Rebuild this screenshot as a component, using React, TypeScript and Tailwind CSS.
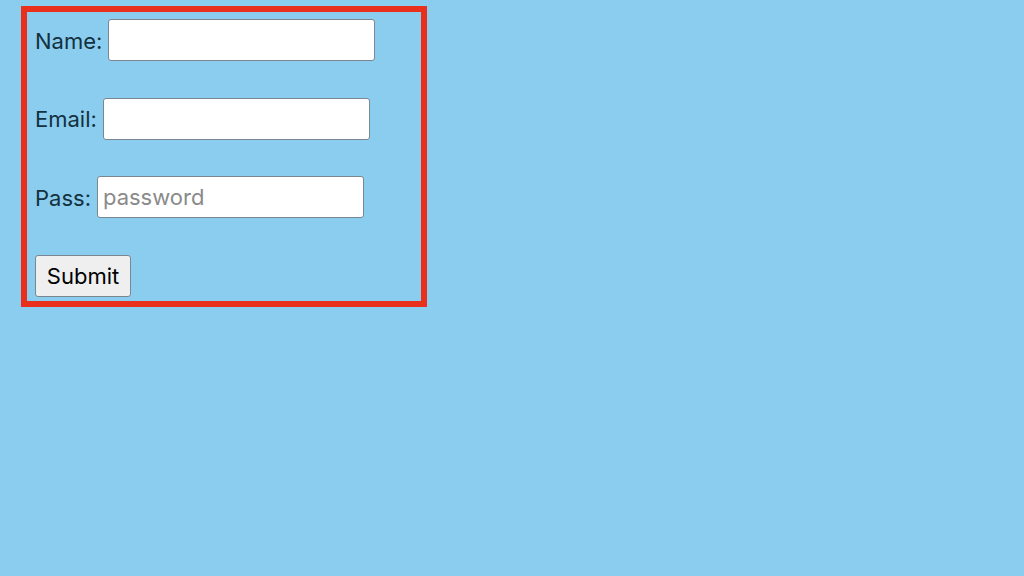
export default function App() {
  const font = { fontFamily: 'Inter, "Noto Sans", sans-serif' };
  return (
    <div className="w-[1024px] h-[576px] bg-[#8bcdee] overflow-hidden" style={font}>
      <div className="pt-[6px] pl-[21px]">
        <form
          className="w-[406px] border-[6px] border-[#e8301c] pl-[8px] pt-[7px] pb-[4px] flex flex-col gap-[36.5px]"
          onSubmit={(e) => e.preventDefault()}
        >
          <div className="flex items-center gap-[6px] h-[42px]">
            <label className="text-[22px] text-[#14313f] pt-[2px]">Name:</label>
            <input type="text" className="w-[267px] h-[42px] bg-white border border-[#7a8690] rounded-[3px] px-[5px] text-[22px] outline-none" />
          </div>
          <div className="flex items-center gap-[6px] h-[42px]">
            <label className="text-[22px] text-[#14313f] pt-[2px]">Email:</label>
            <input type="text" className="w-[267px] h-[42px] bg-white border border-[#7a8690] rounded-[3px] px-[5px] text-[22px] outline-none" />
          </div>
          <div className="flex items-center gap-[6px] h-[42px]">
            <label className="text-[22px] text-[#14313f] pt-[2px]">Pass:</label>
            <input type="password" placeholder="password" className="w-[267px] h-[42px] bg-white border border-[#7a8690] rounded-[3px] px-[5px] text-[22px] placeholder:text-[#8a8a8a] outline-none" />
          </div>
          <div className="flex h-[42px]">
            <button type="submit" className="w-[96px] h-[42px] bg-[#efefef] border border-[#7a8690] rounded-[3px] text-[22px] text-black pt-[2px]">Submit</button>
          </div>
        </form>
      </div>
    </div>
  );
}
